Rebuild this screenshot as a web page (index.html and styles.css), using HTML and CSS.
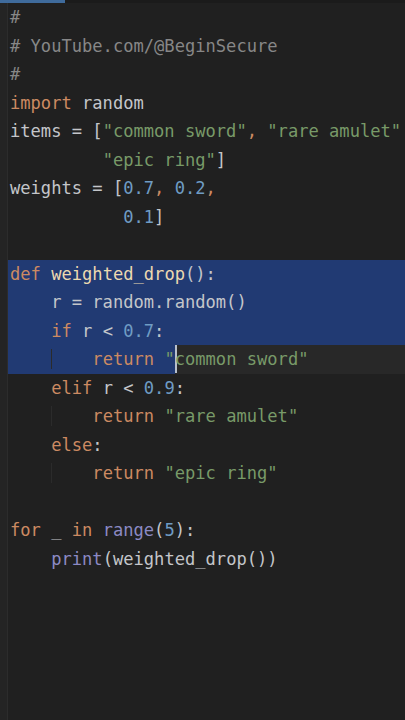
FILE: index.html
```html
<!DOCTYPE html>
<html>
<head>
<meta charset="utf-8">
<link rel="stylesheet" href="styles.css">
</head>
<body>
<div class="editor">
  <div class="topbar"><span class="tab"></span></div>
  <div class="main">
    <div class="gutter"></div>
    <div class="code">
      <div class="ln"><span class="c">#</span></div>
      <div class="ln"><span class="c"># YouTube.com/@BeginSecure</span></div>
      <div class="ln"><span class="c">#</span></div>
      <div class="ln"><span class="k">import</span> random</div>
      <div class="ln">items = [<span class="s">"common sword"</span><span class="k">,</span> <span class="s">"rare amulet"</span></div>
      <div class="ln">         <span class="s">"epic ring"</span>]</div>
      <div class="ln">weights = [<span class="n">0.7</span><span class="k">,</span> <span class="n">0.2</span><span class="k">,</span></div>
      <div class="ln">           <span class="n">0.1</span>]</div>
      <div class="ln"> </div>
      <div class="ln sel"><span class="k">def</span> <span class="f">weighted_drop</span>():</div>
      <div class="ln sel">    r = random.random()</div>
      <div class="ln sel">    <span class="k">if</span> r &lt; <span class="n">0.7</span>:</div>
      <div class="ln cur"><span class="selpart">    <span class="g">    </span><span class="k">return</span> <span class="s">"</span></span><span class="caret"></span><span class="s">common sword"</span></div>
      <div class="ln">    <span class="k">elif</span> r &lt; <span class="n">0.9</span>:</div>
      <div class="ln">    <span class="g">    </span><span class="k">return</span> <span class="s">"rare amulet"</span></div>
      <div class="ln">    <span class="k">else</span>:</div>
      <div class="ln">    <span class="g">    </span><span class="k">return</span> <span class="s">"epic ring"</span></div>
      <div class="ln"> </div>
      <div class="ln"><span class="k">for</span> _ <span class="k">in</span> <span class="b">range</span>(<span class="n">5</span>):</div>
      <div class="ln">    <span class="b">print</span>(weighted_drop())</div>
    </div>
  </div>
</div>
</body>
</html>
```

FILE: styles.css
```css
html, body {
  margin: 0;
  padding: 0;
  background: #202020;
}
.editor {
  width: 405px;
  height: 720px;
  overflow: hidden;
  background: #202020;
  display: flex;
  flex-direction: column;
}
.topbar {
  height: 3px;
  background: #1b1b1b;
  display: flex;
}
.tab {
  width: 65px;
  background: #3f6b9c;
}
.main {
  flex: 1;
  display: flex;
}
.gutter {
  width: 7px;
  background: #242424;
  border-right: 1px solid #2c2c2c;
  flex: none;
}
.code {
  flex: 1;
  min-width: 0;
  font-family: "DejaVu Sans Mono", "Liberation Mono", monospace;
  font-size: 17.1px;
  line-height: 28.5px;
  color: #c4c6ca;
}
.ln {
  height: 28.5px;
  padding-left: 2px;
  white-space: pre;
  overflow: hidden;
}
.sel {
  background: #213a73;
}
.cur {
  background: #282828;
}
.selpart {
  background: #213a73;
  margin-left: -2px;
  padding-left: 2px;
  display: inline-block;
  height: 28.5px;
  vertical-align: top;
}
.caret {
  display: inline-block;
  width: 2px;
  height: 28px;
  margin-right: -2px;
  vertical-align: top;
  background: #b8c0cc;
}
.g {
  box-shadow: inset 1px 0 0 #2b2b2b;
}
.c { color: #878787; }
.k { color: #cc8a62; }
.s { color: #789a68; }
.n { color: #6f9cc4; }
.f { color: #ecd9b0; }
.b { color: #8c8ac4; }
```
